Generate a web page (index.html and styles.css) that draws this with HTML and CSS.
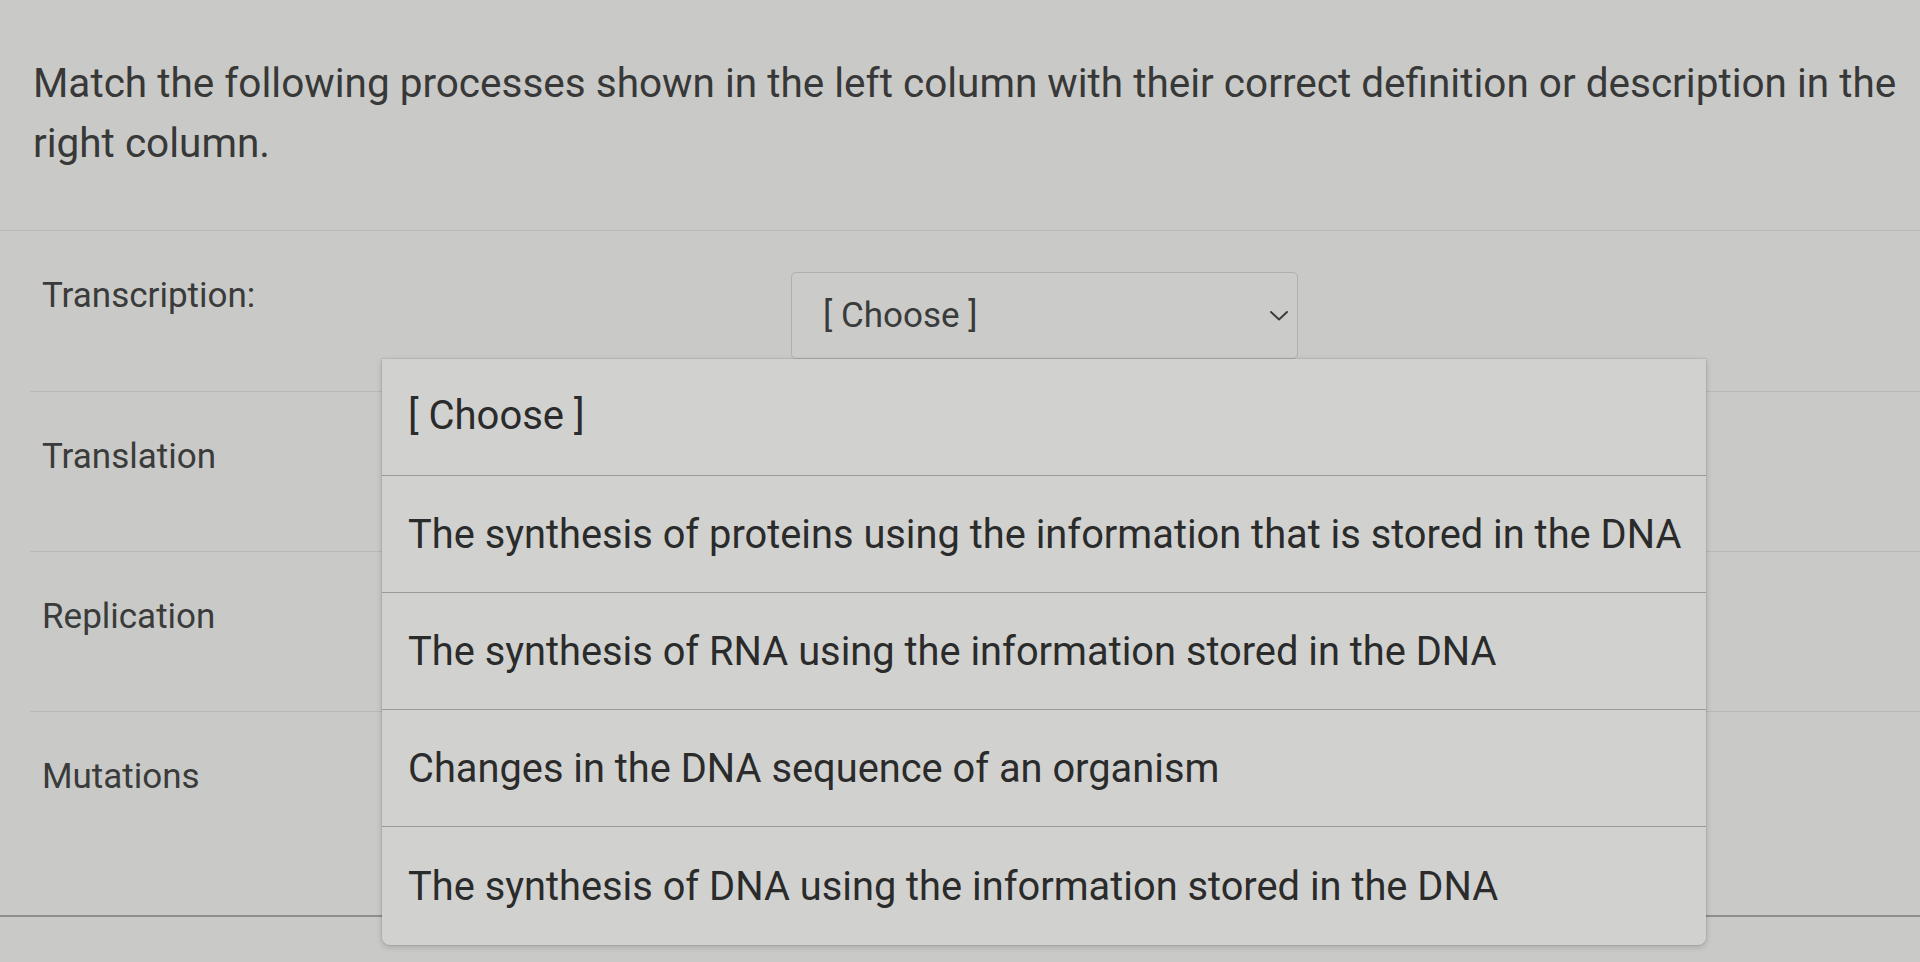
FILE: index.html
```html
<!DOCTYPE html>
<html lang="en">
<head>
<meta charset="utf-8">
<title>Matching question</title>
<link rel="stylesheet" href="styles.css">
</head>
<body>
<div class="page">
  <p class="question">Match the following processes shown in the left column with their correct definition or description in the right column.</p>
  <div class="answers">
    <div class="row">
      <div class="label">Transcription:</div>
      <div class="select-wrap">
        <div class="select">
          <span class="select-text">[ Choose ]</span>
          <svg class="chevron" width="20" height="12" viewBox="0 0 20 12"><path d="M2 2 L10 9.5 L18 2" fill="none" stroke="#3a3b3a" stroke-width="1.9" stroke-linecap="round" stroke-linejoin="round"/></svg>
        </div>
        <ul class="menu">
          <li class="option">[ Choose ]</li>
          <li class="option">The synthesis of proteins using the information that is stored in the DNA</li>
          <li class="option">The synthesis of RNA using the information stored in the DNA</li>
          <li class="option">Changes in the DNA sequence of an organism</li>
          <li class="option">The synthesis of DNA using the information stored in the DNA</li>
        </ul>
      </div>
    </div>
    <div class="row">
      <div class="label">Translation</div>
    </div>
    <div class="row">
      <div class="label">Replication</div>
    </div>
    <div class="row row-last">
      <div class="label">Mutations</div>
    </div>
  </div>
</div>
</body>
</html>
```

FILE: styles.css
```css
html, body {
  margin: 0;
  padding: 0;
}
body {
  background: #c9cac8;
  font-family: Roboto, "Liberation Sans", Arial, sans-serif;
  color: #333433;
  width: 1920px;
  height: 962px;
  overflow: hidden;
}
.page {
  padding-top: 53px;
}
.question {
  margin: 0 0 57px 0;
  padding: 0 4px 0 33px;
  font-size: 40.5px;
  line-height: 60px;
  color: #373837;
}
.answers {
  border-bottom: 2px solid #8f908e;
}
.row {
  display: flex;
  height: 159px;
  margin-left: 30px;
  border-top: 1px solid #b9bab8;
}
.row:first-child {
  margin-left: 0;
  padding-left: 30px;
  height: 160px;
}
.row-last {
  height: 203px;
}
.label {
  width: 749px;
  padding: 45px 0 0 12px;
  box-sizing: border-box;
  font-size: 35px;
  line-height: 40px;
  color: #3a3b3a;
}
.row:first-child .label {
  width: 761px;
  padding-left: 12px;
}
.select-wrap {
  position: relative;
  margin-top: 41px;
}
.select {
  width: 507px;
  height: 87px;
  box-sizing: border-box;
  border: 1px solid #b0b1af;
  border-radius: 5px;
  background: #cbccca;
  display: flex;
  align-items: center;
  justify-content: space-between;
  padding: 0 8px 0 31px;
}
.select-text {
  font-size: 35px;
  color: #3a3b3a;
}
.chevron {
  display: block;
}
.menu {
  position: absolute;
  top: 87px;
  left: -409px;
  width: 1324px;
  margin: 0;
  padding: 0;
  list-style: none;
  background: #d1d2d0;
  border-radius: 0 0 8px 8px;
  box-shadow: 0 2px 6px rgba(0, 0, 0, 0.18), 0 0 0 1px rgba(0, 0, 0, 0.06);
  z-index: 2;
}
.option {
  height: 117px;
  box-sizing: border-box;
  display: flex;
  align-items: center;
  padding-left: 26px;
  font-size: 39.8px;
  color: #2a2b2a;
  border-bottom: 1px solid #999a98;
}
.option:first-child {
  height: 117px;
  font-size: 40px;
  padding-bottom: 4px;
}
.option:last-child {
  border-bottom: none;
  height: 118px;
}
```
